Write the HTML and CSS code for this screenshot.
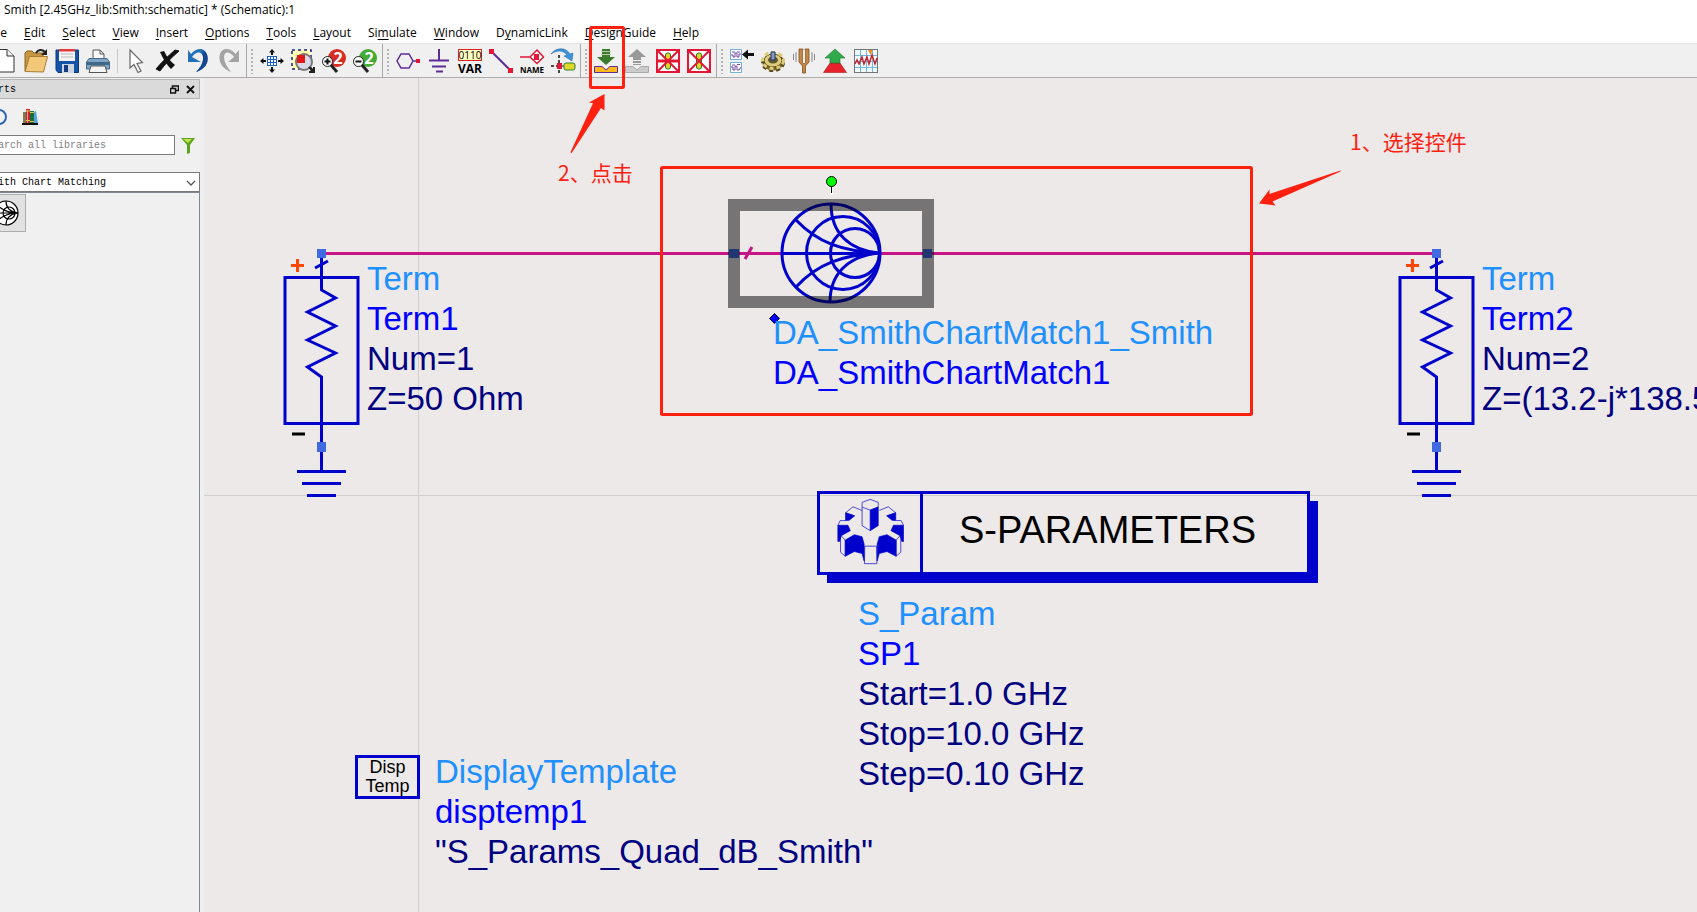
FILE: index.html
```html
<!DOCTYPE html>
<html lang="en">
<head>
<meta charset="utf-8">
<title>Smith [2.45GHz_lib:Smith:schematic] * (Schematic):1</title>
<link rel="stylesheet" href="styles.css">
</head>
<body>
<div class="window">
  <header class="titlebar">Smith [2.45GHz_lib:Smith:schematic] * (Schematic):1</header>

  <nav class="menubar" aria-label="Main menu">
    <button class="menu">F<u>i</u>le</button>
    <button class="menu"><u>E</u>dit</button>
    <button class="menu"><u>S</u>elect</button>
    <button class="menu"><u>V</u>iew</button>
    <button class="menu"><u>I</u>nsert</button>
    <button class="menu"><u>O</u>ptions</button>
    <button class="menu"><u>T</u>ools</button>
    <button class="menu"><u>L</u>ayout</button>
    <button class="menu">Si<u>m</u>ulate</button>
    <button class="menu"><u>W</u>indow</button>
    <button class="menu">D<u>y</u>namicLink</button>
    <button class="menu"><u>D</u>esignGuide</button>
    <button class="menu"><u>H</u>elp</button>
  </nav>

  <div class="toolbar" role="toolbar" aria-label="Schematic tools">
    <div class="tool-group tool-group-file">
      <button class="tool" aria-label="New"><svg viewBox="0 0 24 24"><path d="M1 .5h13l7 6.500v16H1z" fill="#fff" stroke="#333"/><path d="M14 .5V7h7" fill="#eee" stroke="#333"/></svg></button>
      <button class="tool" aria-label="Open"><svg viewBox="0 0 24 24"><path d="M1 22V4l2-2h5l2 2h9v4" fill="#c89540" stroke="#8a6420"/><path d="M1 22.500 5.500 7.500h18L19.500 23z" fill="#f2c878" stroke="#a87c34"/><path d="M12 4c2-3.500 6-4 9-1" fill="none" stroke="#222" stroke-width="2"/><path d="M23 0v6h-6z" fill="#222"/></svg></button>
      <button class="tool" aria-label="Save"><svg viewBox="0 0 24 24"><path d="M1 1h22.500v22.500H3L1 21z" fill="#1553a8" stroke="#0a3880"/><path d="M4 0h16v12H4z" fill="#f4f4f4"/><path d="M4 0h16v2.500H4z" fill="#e33b36"/><path d="M6 5h12M6 8h12" stroke="#bbb"/><path d="M7 15h12v9H7z" fill="#ced5e0"/><path d="M9 16h4v7H9z" fill="#153d83"/></svg></button>
      <button class="tool" aria-label="Print"><svg viewBox="0 0 24 24"><path d="M7 10V1h7l4 4v5" fill="#fafafa" stroke="#555"/><path d="M14 1v4h4" fill="none" stroke="#555"/><path d="M3 9.500h18L23.500 13v7H.5v-7z" fill="#80a5c5" stroke="#446a8c"/><path d="M1 13h22v3H1z" fill="#3e6789"/><path d="M5 17h14l2 6.500H3z" fill="#f4f4f4" stroke="#555"/></svg></button>
      <span class="tool-rule"></span>
      <button class="tool" aria-label="Pointer"><svg viewBox="0 0 24 24"><path d="M5 1v18l4-3.500 4 8 3-1.500-4-7.500 5.500-1z" fill="#fff" stroke="#666" stroke-width="1.200"/></svg></button>
      <button class="tool" aria-label="Delete"><svg viewBox="0 0 24 24"><path d="M0 20C5 14 12 7 19 1l4 1C15 9 9 15 4 22z" fill="#111" stroke="#111"/><path d="M4 3l4-1c3 6 6 10 11 14l-4 4C11 16 7 10 4 3z" fill="#111"/></svg></button>
      <button class="tool" aria-label="Undo"><svg viewBox="0 0 24 24"><path d="M5 8C9 2 15 2 16 8c.5 5-2 10-7 15 9-3 12.500-9 11.500-15C19-2 10-2 4 5L1 1v12h13z" fill="#2370b8"/><path d="M16 8c.5 5-2 10-7 15 9-3 12.500-9 11.500-15 0-3-2-6-5-6z" fill="#164590"/></svg></button>
      <button class="tool" aria-label="Redo"><svg viewBox="0 0 24 24"><path d="M16 8C12 2 6 2 6 8c0 5 3 10 7 15C5 20 1 14 1.500 8 2-2 12-2 17.500 5L21 1v12H10z" fill="#a4a4a4"/></svg></button>
    </div>
    <div class="tool-group">
      <span class="grip"></span>
      <button class="tool" aria-label="View all"><svg viewBox="0 0 24 24"><rect x="7.500" y="7.500" width="9" height="9" fill="#fff" stroke="#1b62c5"/><path d="M10.500 7v10M13.500 7v10M7 10.500h10M7 13.500h10" stroke="#1b62c5"/><path d="M12 0l3 3.500h-2V6h-2V3.500H9zM12 24l3-3.500h-2V18h-2v2.500H9zM0 12l3.500-3v2H6v2H3.500v2zM24 12l-3.500-3v2H18v2h2.500v2z" fill="#111"/></svg></button>
      <button class="tool" aria-label="Zoom to area"><svg viewBox="0 0 24 24"><rect x="1" y="1" width="19" height="19" fill="#ffffb4" stroke="#1c1c80" stroke-width="1.500" stroke-dasharray="3 3"/><circle cx="13" cy="13" r="8" fill="#d5dae6" stroke="#777" stroke-width="2"/><path d="M6 6h8v8H6z" fill="#e41818"/><path d="m18 18 5 5m0-5v5h-5" stroke="#222" stroke-width="2"/></svg></button>
      <button class="tool" aria-label="Zoom in by 2"><svg viewBox="0 0 24 24"><circle cx="15" cy="9" r="9" fill="#d72d25"/><text class="zoom-digit" x="16" y="15">2</text><circle cx="5.500" cy="12.500" r="5" fill="#fff" stroke="#222"/><path d="M2.500 12.500h6M5.500 9.500v6" stroke="#111" stroke-width="2"/><path d="m9 16 6 7" stroke="#222" stroke-width="3"/></svg></button>
      <button class="tool" aria-label="Zoom out by 2"><svg viewBox="0 0 24 24"><circle cx="15" cy="9" r="9" fill="#45aa36"/><text class="zoom-digit" x="16" y="15">2</text><circle cx="5.500" cy="12.500" r="5" fill="#fff" stroke="#222"/><path d="M2.500 12.500h6" stroke="#111" stroke-width="2"/><path d="m9 16 6 7" stroke="#222" stroke-width="3"/></svg></button>
    </div>
    <div class="tool-group">
      <span class="grip"></span>
      <button class="tool" aria-label="Insert pin"><svg viewBox="0 0 24 24"><path d="M5 5h8l4 7-4 7H5l-4-7zM17 12h4" fill="none" stroke="#5f2c94" stroke-width="1.500"/><path d="M20 10h4v4h-4z" fill="#e51635"/></svg></button>
      <button class="tool" aria-label="Insert ground"><svg viewBox="0 0 24 24"><path d="M12 0v11M2 11.500h20M5 17.500h14M9 22.500h7" fill="none" stroke="#5f2c94" stroke-width="2"/></svg></button>
      <button class="tool" aria-label="Insert variable"><svg viewBox="0 0 24 24"><rect x=".5" y=".5" width="23" height="11" fill="#ffffc0" stroke="#d22"/><text class="icon-bits" x="12" y="10">0110</text><text class="icon-var" x="12" y="24">VAR</text></svg></button>
      <button class="tool" aria-label="Insert wire"><svg viewBox="0 0 24 24"><path d="m2 2 20 20" stroke="#5f2c94" stroke-width="2"/><path d="M0 0h5v5H0zM19 19h5v5h-5z" fill="#e51635"/></svg></button>
      <button class="tool" aria-label="Insert wire label"><svg viewBox="0 0 24 24"><path d="M0 8h11M17 1l6.500 7-6.500 6.500L10 8z" fill="#fff" stroke="#e51635" stroke-width="1.500"/><path d="M14 5h5v6h-5z" fill="#e51635"/><text class="icon-name" x="12" y="24">NAME</text></svg></button>
      <button class="tool" aria-label="Swap component"><svg viewBox="0 0 24 24"><path d="M0 5C5-2 15-2 19 5l3-1-1 8-8-5 3-1C12 1 6 1 0 5z" fill="#3c94d8" stroke="#1c639e" stroke-width=".5"/><path d="M0 17h6M8 6v18" stroke="#111" stroke-width="1.500" stroke-dasharray="3 2"/><path d="M10 17h3" stroke="#111"/><rect x="13" y="14" width="11" height="7" rx="2" fill="#dfd82a" stroke="#34812c"/><path d="M6 14h5v6H6z" fill="#e51635"/></svg></button>
    </div>
    <div class="tool-group">
      <span class="grip"></span>
      <button class="tool" aria-label="Push into hierarchy"><svg viewBox="0 0 24 24"><path d="M8 0h8v8h5l-9 8-9-8h5z" fill="#3a7c2b"/><path d="M7 2.500h10M7 5.500h10" stroke="#b3cba8"/><path d="M.5 17.500H8l4 3.500 4-3.500h7.500v6H.5z" fill="#ffb91a" stroke="#5f2c94"/></svg></button>
      <button class="tool" aria-label="Pop out of hierarchy"><svg viewBox="0 0 24 24"><path d="M12 0l9 8h-5v8H8V8H3z" fill="#999"/><path d="M7 11.500h10M7 14.500h10" stroke="#eee"/><path d="M.5 17.500H8l4 3.500 4-3.500h7.500v6H.5z" fill="#ccc" stroke="#aaa"/></svg></button>
      <button class="tool" aria-label="Deactivate and short"><svg viewBox="0 0 24 24"><rect x="1" y="1" width="22" height="22" fill="#fff" stroke="#e51635" stroke-width="2"/><rect x="9.500" y="4" width="5" height="16" rx="2" fill="#ddd52a" stroke="#27702a"/><path d="m2 2 20 20M22 2 2 22" stroke="#e51635" stroke-width="2"/><path d="M0 12h24" stroke="#e51635" stroke-width="3"/></svg></button>
      <button class="tool" aria-label="Deactivate"><svg viewBox="0 0 24 24"><rect x="1" y="1" width="22" height="22" fill="#fff" stroke="#e51635" stroke-width="2"/><rect x="9.500" y="4" width="5" height="16" rx="2" fill="#ddd52a" stroke="#27702a"/><path d="m2 2 20 20M22 2 2 22" stroke="#e51635" stroke-width="2"/></svg></button>
    </div>
    <div class="tool-group tool-group-last">
      <span class="grip"></span>
      <button class="tool" aria-label="Display template"><svg viewBox="0 0 24 24"><path d="M.5.5h11v10H.5zM.5 13.500h11v10H.5z" fill="#fff" stroke="#76afd8"/><path d="M1 6h2v2h2V4h2v4h2V5h2M1 18h2v3h2v-4h2v4h2l2-3M2 3h3M2 16h3M7 3h3M7 15.500h3" fill="none" stroke="#7b46a6"/><path d="M12 5.500l6-5v3.500h6v3h-6v3.500z" fill="#111"/></svg></button>
      <button class="tool" aria-label="Simulate"><svg viewBox="0 0 24 24"><ellipse cx="12" cy="14" rx="10.500" ry="7.500" fill="#7a6525" stroke="#5b4a18" stroke-width="3" stroke-dasharray="4 3"/><ellipse cx="12" cy="11.500" rx="9" ry="6.500" fill="#dccb7a" stroke="#5b4a18" stroke-width="1"/><ellipse cx="12" cy="11.500" rx="10.500" ry="8" fill="none" stroke="#dccb7a" stroke-width="3" stroke-dasharray="4 3"/><ellipse cx="12" cy="11" rx="5" ry="3.500" fill="#5f5630"/><path d="M10 3h4v8h-4z" fill="#7e9ac8" stroke="#27365c"/></svg></button>
      <button class="tool" aria-label="Tune"><svg viewBox="0 0 24 24"><path d="M7 0h4v14h2V0h4v13l-3.500 4v7h-3v-7L7 13z" fill="#c48548" stroke="#80511f" stroke-width=".8"/><path d="M11 1h2v13h-2z" fill="#eee"/><path d="M4 3v10M1.500 5v6M20 3v10M22.500 5v6" stroke="#888"/></svg></button>
      <button class="tool" aria-label="Optimize"><svg viewBox="0 0 24 24"><path d="M7 14h10l6.500 9.500H.5z" fill="#e8222c" stroke="#a32020" stroke-width=".6"/><path d="M12 0l10 9h-5v5H7V9H2z" fill="#31ab49" stroke="#1d7430" stroke-width=".6"/></svg></button>
      <button class="tool" aria-label="Data display"><svg viewBox="0 0 24 24"><rect x=".5" y=".5" width="23" height="23" fill="#f1faff" stroke="#71757c"/><path d="M6.500 1v22M12.500 1v22M18.500 1v22M1 6.500h22M1 12.500h22M1 18.500h22" stroke="#70b9de"/><path d="m1 15 2-4 2 4 3-7 2 7 3-7 2 7 3-9 3 9 2-6" fill="none" stroke="#c4232b" stroke-width="1.500"/><path d="M14 1h5l-2.500 5z" fill="#f28b20"/></svg></button>
    </div>
  </div>

  <div class="workspace">
    <aside class="parts">
      <div class="parts-title">
        <span class="parts-name">Parts</span>
        <button class="dock-button" aria-label="Float"><svg width="9" height="9" viewBox="0 0 9 9"><path d="M2.500 3V1h6v4.500H6" fill="none" stroke="#111" stroke-width="1.500"/><path d="M.5 3.500h5v4.500h-5z" fill="none" stroke="#111" stroke-width="1.500"/></svg></button>
        <button class="dock-button" aria-label="Close"><svg width="9" height="9" viewBox="0 0 9 9"><path d="m1 1 7 7M8 1 1 8" stroke="#111" stroke-width="1.800"/></svg></button>
      </div>
      <div class="parts-actions">
        <button class="plain" aria-label="Refresh"><svg width="16" height="16" viewBox="0 0 16 16"><circle cx="8" cy="8" r="7" fill="none" stroke="#2e64b8" stroke-width="2"/></svg></button>
        <button class="plain" aria-label="Open library browser"><svg width="16" height="17" viewBox="0 0 16 17"><path d="M1 4h3v12H1z" fill="#857752"/><path d="M4 1h4v15H4z" fill="#c82430"/><path d="M5.500 2v13" stroke="#f0a090"/><path d="M8 3h4v13H8z" fill="#13723b"/><path d="M8 4.500h4M8 13.500h4M4 3h4M4 12.500h4" stroke="#e6c63a"/><path d="m12 4 2-1 2 13h-4z" fill="#5aa0e0"/><path d="M0 16h16" stroke="#111" stroke-width="2"/></svg></button>
      </div>
      <div class="search-row">
        <input class="search" type="text" placeholder="Search all libraries" aria-label="Search all libraries">
        <button class="plain" aria-label="Filter"><svg width="14" height="17" viewBox="0 0 14 17"><path d="M0 1h14L9 8v8l-3 1V8z" fill="#5aa51c"/><path d="M2 2h9L7 6z" fill="#c3e04a"/></svg></button>
      </div>
      <div class="library-row">
        <select class="library" aria-label="Palette"><option>Smith Chart Matching</option></select>
        <svg class="library-arrow" width="10" height="6" viewBox="0 0 10 6"><path d="m1 1 4 4 4-4" fill="none" stroke="#555" stroke-width="1.300"/></svg>
      </div>
      <div class="palette">
        <button class="part" aria-label="Smith Chart Match"><svg width="26" height="26" viewBox="0 0 26 26"><g fill="none" stroke="#000" stroke-width="1.200"><circle cx="13" cy="13" r="12" fill="#fff"/><circle cx="16" cy="13" r="6"/><path d="M1 13h24M13 1c0 7 5 11 12 12-7 1-12 5-12 12M4 5c6 6 12 8 21 8-9 0-15 2-21 8"/></g></svg></button>
      </div>
    </aside>

    <main class="canvas">
      <svg class="wires" width="1493" height="834" viewBox="204 78 1493 834">
        <defs>
          <symbol id="term" viewBox="0 0 80 250">
            <g fill="none" stroke="#0000cd" stroke-width="3">
              <path d="M2 29.500h73v146H2zM38.500 7v35l14 8-28 14 28 14-28 14 28 13-28 14 14 10v95M32 20l13-7"/>
              <path d="M14 223.500h49M19 235.500h39M24 247.500h29"/>
            </g>
            <path d="M34 1h9v9h-9zM34 194h9v10h-9z" fill="#4169e1"/>
            <path d="M8 17.500h13M14.500 11v13" stroke="#ff4500" stroke-width="3"/>
            <path d="M9 186h13" stroke="#000" stroke-width="3"/>
          </symbol>
        </defs>
        <path d="M418.500 78v834M204 495.500h1493" stroke="#cfcfcf"/>
        <path d="M321 253.500h461M880 253.500h557M745 259l7-12" stroke="#c71585" stroke-width="3"/>
        <use href="#term" x="283" y="248" width="80" height="250"/>
        <use href="#term" x="1398" y="248" width="80" height="250"/>

        <g fill="none" stroke="#0000cd" stroke-width="3">
          <circle cx="831" cy="253" r="49"/>
          <circle cx="843" cy="253" r="36.500"/>
          <circle cx="855" cy="253" r="24.500"/>
          <path d="M782 253.500h97M831 204c0 29 18 46 48 49-32 3-49 22-49 49M796 220c22 23 46 31 83 33-37 2-62 11-83 34"/>
        </g>
        <rect x="734" y="205" width="194" height="97" fill="none" stroke="#000" stroke-opacity=".5" stroke-width="12"/>
        <path d="M729 249h10v9h-10zM923 249h9v9h-9z" fill="#203672"/>
        <path d="M831.500 186v9" stroke="#fff" stroke-width="3"/>
        <path d="M831.500 186v7" stroke="#000"/>
        <circle cx="831.500" cy="181.500" r="5" fill="#0f0" stroke="#000"/>
        <path d="m774.500 313.500 5 5-5 5-5-5z" fill="#00f" stroke="#000"/>
      </svg>

      <div class="label label-term1"><p class="type">Term</p><p class="name">Term1</p><p>Num=1</p><p>Z=50 Ohm</p></div>
      <div class="label label-term2"><p class="type">Term</p><p class="name">Term2</p><p>Num=2</p><p>Z=(13.2-j*138.5)</p></div>
      <div class="label label-match"><p class="type">DA_SmithChartMatch1_Smith</p><p class="name">DA_SmithChartMatch1</p></div>

      <div class="sim-box">
        <div class="sim-icon">
          <svg width="71" height="69" viewBox="100 50 210 205">
            <g id="gear-side" fill="none" stroke="#0000cd" stroke-width="2">
              <path d="M180 90 153 79 131 97l26 9M131 120h-16l-7 14M116 165v49l14 12v-48l-12-13M187 248h19M188 196h18"/>
              <path fill="#0000cd" d="m131 97 27 9-16 13-11 1zM108 134h30l7 16-27 15-5 17h-5zM130 178l27-16 23 6 6 22v50l-6-22-23-6-27 14z"/>
              <path d="M188 196l-1 52"/>
            </g>
            <use href="#gear-side" transform="translate(411 0) scale(-1 1)"/>
            <g stroke="#0000cd" stroke-width="2" fill="none">
              <path d="m180 66 24-9 24 9v14l-24 9-24-9zM180 80v55l24 15"/>
              <path fill="#0000cd" d="m204 89 24-9v55l-24 15z"/>
            </g>
          </svg>
        </div>
        <div class="sim-title">S-PARAMETERS</div>
      </div>
      <div class="label label-sim"><p class="type">S_Param</p><p class="name">SP1</p><p>Start=1.0 GHz</p><p>Stop=10.0 GHz</p><p>Step=0.10 GHz</p></div>

      <div class="display-box">Disp<br>Temp</div>
      <div class="label label-display"><p class="type">DisplayTemplate</p><p class="name">disptemp1</p><p>"S_Params_Quad_dB_Smith"</p></div>
    </main>
  </div>

  <div class="notes">
    <svg class="note-marks" width="1697" height="912" viewBox="0 0 1697 912">
      <g fill="none" stroke="#ff2010" stroke-width="3" stroke-linejoin="round">
        <rect x="661.500" y="167.500" width="590" height="247" rx="1"/>
        <rect x="590.500" y="27.500" width="33" height="60" rx="1"/>
      </g>
      <path d="m1259 203.500 10.500-14v4.500l71-23.500v1l-68 30 3 4zM604.500 94l-15.500 8.500 4 .8-22.500 49 1 1L601 108l3.500 2.500z" fill="#ff2010"/>
    </svg>
    <p class="note note-select">1、选择控件</p>
    <p class="note note-click">2、点击</p>
  </div>
</div>
</body>
</html>
```

FILE: styles.css
```css
* { box-sizing: border-box; }

body {
  margin: 0;
  background: #fff;
  font-family: "Open Sans", "Noto Sans", sans-serif;
  font-size: 12px;
  color: #000;
}

p { margin: 0; }

button {
  border: 0;
  padding: 0;
  background: none;
  font: inherit;
  color: inherit;
}

.window {
  position: relative;
  display: flex;
  flex-direction: column;
  height: 100vh;
  overflow: hidden;
}

/* Title and menus */
.titlebar {
  height: 21px;
  padding-left: 4px;
  line-height: 20px;
  white-space: nowrap;
}

.menubar {
  display: flex;
  gap: 17px;
  height: 22px;
  margin-left: -12px;
  line-height: 24px;
}

.menu { line-height: 24px; white-space: nowrap; }
.menu u { text-underline-offset: 2px; }

/* Toolbar */
.toolbar {
  display: flex;
  height: 35px;
  border-top: 1px solid #e4e4e4;
  border-bottom: 1px solid #acacac;
  background: #f0f0f0;
}

.tool-group {
  position: relative;
  display: flex;
  align-items: center;
  gap: 7px;
  padding: 0 5px 0 13px;
  border-right: 1px solid #a8a8a8;
}

.tool-group-file {
  margin-left: -7px;
  padding: 0 4px 0 0;
}

.tool-group-last { border-right: 0; }

.grip {
  position: absolute;
  left: 4px;
  top: 5px;
  bottom: 3px;
  width: 2px;
  background: repeating-linear-gradient(#b4b4b4 0 2px, transparent 2px 4px);
}

.tool { width: 24px; height: 24px; }
.tool svg { display: block; width: 24px; height: 24px; overflow: visible; }

.tool-rule { width: 1px; height: 24px; background: #c8c8c8; }

.zoom-digit, .icon-bits, .icon-var, .icon-name { text-anchor: middle; }
.zoom-digit { font: bold 16px "Open Sans", sans-serif; fill: #fff; }
.icon-bits { font: 10px "Open Sans", sans-serif; }
.icon-var { font: bold 12px "Open Sans", sans-serif; }
.icon-name { font: bold 8px "Open Sans", sans-serif; }

/* Parts panel */
.workspace {
  display: flex;
  flex: 1;
  min-height: 0;
}

.parts {
  display: flex;
  flex-direction: column;
  flex: none;
  width: 222px;
  margin-left: -18px;
  padding: 1px 4px 0 0;
  background: #f0f0f0;
  font-family: "Liberation Mono", monospace;
  font-size: 10px;
}

.parts-title {
  display: flex;
  align-items: center;
  gap: 7px;
  height: 20px;
  padding: 0 4px 0 3px;
  border: 1px solid #b4b4b4;
  background: #dadada;
}

.parts-name { flex: 1; }
.dock-button svg, .plain svg { display: block; }

.parts-actions {
  display: flex;
  align-items: center;
  gap: 15px;
  height: 36px;
  padding: 0 0 1px 9px;
}

.search-row {
  display: flex;
  align-items: center;
  gap: 6px;
  height: 20px;
  padding-right: 5px;
}

.search {
  flex: 1;
  min-width: 0;
  height: 20px;
  padding: 0 3px;
  border: 1px solid #7a7a7a;
  background: #fff;
  font: inherit;
}

.search::placeholder { color: #7f7f7f; opacity: 1; }

.library-row {
  position: relative;
  margin-top: 17px;
}

.library {
  display: block;
  width: 100%;
  height: 20px;
  padding: 0 3px;
  border: 1px solid #7a7a7a;
  border-radius: 0;
  background: #fff;
  color: #000;
  font: inherit;
  appearance: none;
}

.library-arrow {
  position: absolute;
  right: 4px;
  top: 8px;
}

.palette {
  flex: 1;
  padding-top: 1px;
  border: 1px solid #828790;
  border-bottom: 0;
}

.part {
  display: flex;
  align-items: center;
  justify-content: center;
  width: 43px;
  height: 38px;
  padding-left: 2px;
  border: 1px solid #adadad;
  background: #e1e1e1;
}

/* Schematic canvas */
.canvas {
  position: relative;
  flex: 1;
  overflow: hidden;
  background: #ede9e8;
  font-family: "Liberation Sans", Arial, sans-serif;
}

.wires { position: absolute; left: 0; top: 0; }

.label {
  position: absolute;
  font-size: 33px;
  line-height: 40px;
  color: #000080;
  white-space: nowrap;
}

.label .type { color: #1e90ff; }
.label .name { color: #0000ff; }

.label-term1 { left: 163px; top: 181px; }
.label-term2 { left: 1278px; top: 181px; }
.label-match { left: 569px; top: 235px; }
.label-sim { left: 654px; top: 516px; }
.label-display { left: 231px; top: 674px; }

.sim-box {
  position: absolute;
  left: 613px;
  top: 413px;
  display: flex;
  width: 493px;
  height: 84px;
  border: 3px solid #0000cd;
  box-shadow: 9px 9px 0 -1px #0000cd;
}

.sim-icon {
  display: flex;
  align-items: center;
  justify-content: center;
  width: 103px;
  padding-bottom: 3px;
  border-right: 3px solid #0000cd;
}

.sim-title {
  flex: 1;
  padding-right: 15px;
  font-size: 38px;
  line-height: 72px;
  text-align: center;
}

.display-box {
  position: absolute;
  left: 151px;
  top: 677px;
  width: 65px;
  height: 44px;
  border: 3px solid #0000cd;
  font-size: 18px;
  line-height: 19px;
  text-align: center;
}

/* Annotations drawn over the window */
.notes {
  position: absolute;
  inset: 0;
  overflow: hidden;
  pointer-events: none;
}

.note-marks { position: absolute; left: 0; top: 0; }

.note {
  position: absolute;
  font-family: "Noto Sans CJK SC", sans-serif;
  font-size: 21px;
  line-height: 30px;
  font-weight: 400;
  color: #ff2010;
}

.note-select { left: 1350px; top: 126px; }
.note-click { left: 558px; top: 157px; }
```
